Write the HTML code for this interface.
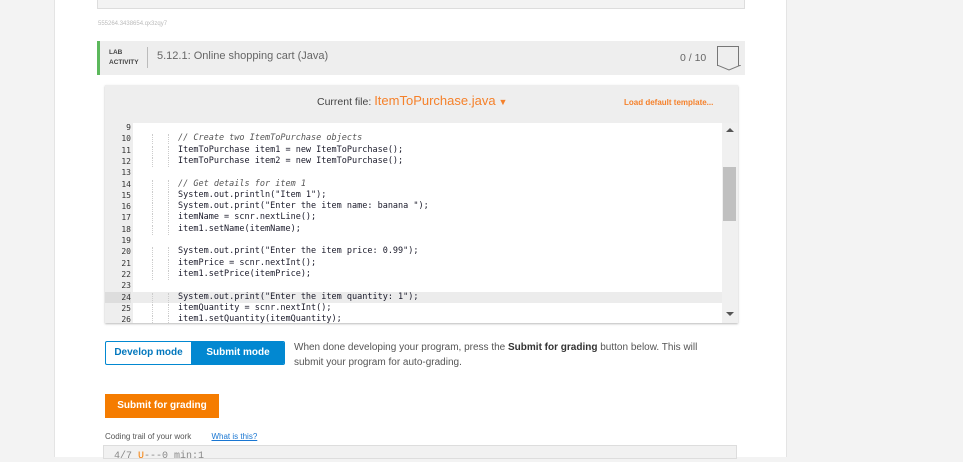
<!DOCTYPE html>
<html><head><meta charset="utf-8"><style>
*{box-sizing:border-box;margin:0;padding:0}
body{width:963px;height:457px;overflow:hidden;background:#f3f3f3;font-family:"Liberation Sans",sans-serif;position:relative}
.main{position:absolute;left:54px;top:0;width:733px;height:457px;background:#fff;border-left:1px solid #e4e4e4;border-right:1px solid #e4e4e4}
.abs{position:absolute}
.topbox{left:97px;top:-2px;width:648px;height:11px;background:#f3f3f3;border:1px solid #ddd}
.hash{left:98px;top:21px;font-size:6px;color:#bbb}
.lab{left:97px;top:41px;width:648px;height:34px;background:#eee;border-left:3px solid #5cb85c}
.lab .t{position:absolute;left:9px;top:7px;font-size:6.5px;font-weight:bold;color:#444;line-height:10px}
.lab .sep{position:absolute;left:47px;top:6px;width:1px;height:21px;background:#bbb}
.lab .ttl{position:absolute;left:57px;top:9px;font-size:11px;color:#666}
.lab .sc{position:absolute;left:580px;top:11px;font-size:10.5px;color:#666}
.badge{position:absolute;left:617px;top:5px;width:22px;height:20px;border:1px solid #777;border-bottom:none}
.badge svg{position:absolute;left:-1px;top:18px}
.ed{left:105px;top:85px;width:633px;height:238px;background:#eee;box-shadow:0 1px 2px #bbb}
.cf{position:absolute;left:212px;top:8px;font-size:10.5px;color:#444}
.cf b{font-weight:normal;color:#f5812b;font-size:13px}
.ld{position:absolute;left:519px;top:13px;font-size:8px;font-weight:bold;color:#f5812b}
.code{position:absolute;left:0;top:38px;width:617px;height:200px;background:#fff;overflow:hidden}
.gut{position:absolute;left:0;top:0;width:28px;height:200px;background:#eee}
.ln{position:absolute;left:0;width:617px;height:11.3px;font:8.5px/11.3px "DejaVu Sans Mono","Liberation Mono",monospace;color:#1a1a2a}
.ln .n{position:absolute;left:0;width:26px;text-align:right;color:#333;font-size:8px}
.ln .c{position:absolute;left:73px;white-space:pre}
.ln .g1{position:absolute;left:47px;top:1px;height:10px;border-left:1px dotted #ccc}
.ln .g2{position:absolute;left:63px;top:1px;height:10px;border-left:1px dotted #ccc}
.cm{color:#555;font-style:italic}
.sb{position:absolute;left:617px;top:38px;width:16px;height:200px;background:#f0f0f0}
.thumb{position:absolute;left:1px;top:44px;width:13px;height:54px;background:#c0c0c0}
.btns{left:105px;top:341px;width:180px;height:24px;border:1px solid #0288d1;border-radius:2px;overflow:hidden;font-size:10px;font-weight:bold}
.btns .d{position:absolute;left:0;top:0;width:85px;height:22px;color:#0277bd;text-align:center;line-height:22px}
.btns .s{position:absolute;left:85px;top:0;width:94px;height:22px;background:#0288d1;color:#fff;text-align:center;line-height:22px}
.desc{left:294px;top:340px;width:430px;font-size:10px;color:#555;line-height:15px}
.desc b{color:#333}
.sfg{left:105px;top:394px;width:114px;height:24px;background:#f57c00;color:#fff;font-size:10px;font-weight:bold;text-align:center;line-height:24px}
.ct{left:105px;top:432px;font-size:8px;color:#555}
.ct a{color:#1976d2;text-decoration:underline;margin-left:18px}
.trail{left:103px;top:445px;width:634px;height:14px;background:#f1f1f1;border:1px solid #ddd;font:10px "Liberation Mono",monospace;color:#888;padding:5px 0 0 10px}
</style></head><body>
<div class="main"></div>
<div class="abs topbox"></div>
<div class="abs hash">555264.3438654.qx3zqy7</div>
<div class="abs lab"><div class="t">LAB<br>ACTIVITY</div><div class="sep"></div><div class="ttl">5.12.1: Online shopping cart (Java)</div><div class="sc">0 / 10</div><div class="badge"><svg width="24" height="6"><path d="M0 0 L12 5 L24 0" fill="none" stroke="#777"/></svg></div></div>
<div class="abs ed">
<div class="cf">Current file: <b>ItemToPurchase.java</b> <span style="color:#f5812b;font-size:9px">&#9660;</span></div>
<div class="ld">Load default template...</div>
<div class="code"><div class="gut"></div>
<div class="ln" style="top:-1px"><span class="n">9</span></div>
<div class="ln" style="top:10.3px"><span class="n">10</span><span class="g1"></span><span class="g2"></span><span class="c cm">// Create two ItemToPurchase objects</span></div>
<div class="ln" style="top:21.6px"><span class="n">11</span><span class="g1"></span><span class="g2"></span><span class="c">ItemToPurchase item1 = new ItemToPurchase();</span></div>
<div class="ln" style="top:32.9px"><span class="n">12</span><span class="g1"></span><span class="g2"></span><span class="c">ItemToPurchase item2 = new ItemToPurchase();</span></div>
<div class="ln" style="top:44.2px"><span class="n">13</span></div>
<div class="ln" style="top:55.5px"><span class="n">14</span><span class="g1"></span><span class="g2"></span><span class="c cm">// Get details for item 1</span></div>
<div class="ln" style="top:66.8px"><span class="n">15</span><span class="g1"></span><span class="g2"></span><span class="c">System.out.println("Item 1");</span></div>
<div class="ln" style="top:78.1px"><span class="n">16</span><span class="g1"></span><span class="g2"></span><span class="c">System.out.print("Enter the item name: banana ");</span></div>
<div class="ln" style="top:89.4px"><span class="n">17</span><span class="g1"></span><span class="g2"></span><span class="c">itemName = scnr.nextLine();</span></div>
<div class="ln" style="top:100.7px"><span class="n">18</span><span class="g1"></span><span class="g2"></span><span class="c">item1.setName(itemName);</span></div>
<div class="ln" style="top:112px"><span class="n">19</span></div>
<div class="ln" style="top:123.3px"><span class="n">20</span><span class="g1"></span><span class="g2"></span><span class="c">System.out.print("Enter the item price: 0.99");</span></div>
<div class="ln" style="top:134.6px"><span class="n">21</span><span class="g1"></span><span class="g2"></span><span class="c">itemPrice = scnr.nextInt();</span></div>
<div class="ln" style="top:145.9px"><span class="n">22</span><span class="g1"></span><span class="g2"></span><span class="c">item1.setPrice(itemPrice);</span></div>
<div class="ln" style="top:157.2px"><span class="n">23</span></div>
<div class="ln" style="top:168.5px;background:#ececec"><span class="n" style="background:#ddd">24</span><span class="g1"></span><span class="g2"></span><span class="c">System.out.print("Enter the item quantity: 1");</span></div>
<div class="ln" style="top:179.8px"><span class="n">25</span><span class="g1"></span><span class="g2"></span><span class="c">itemQuantity = scnr.nextInt();</span></div>
<div class="ln" style="top:191.1px"><span class="n">26</span><span class="g1"></span><span class="g2"></span><span class="c">item1.setQuantity(itemQuantity);</span></div>
</div>
<div class="sb"><div style="position:absolute;left:4px;top:5px;width:0;height:0;border-left:4px solid transparent;border-right:4px solid transparent;border-bottom:4px solid #555"></div><div class="thumb"></div><div style="position:absolute;left:4px;top:189px;width:0;height:0;border-left:4px solid transparent;border-right:4px solid transparent;border-top:4px solid #555"></div></div>
</div>
<div class="abs btns"><div class="d">Develop mode</div><div class="s">Submit mode</div></div>
<div class="abs desc">When done developing your program, press the <b>Submit for grading</b> button below. This will submit your program for auto-grading.</div>
<div class="abs sfg">Submit for grading</div>
<div class="abs ct">Coding trail of your work <a>What is this?</a></div>
<div class="abs trail">4/7 <span style="color:#f57c00">U</span>---0 min:1</div>
</body></html>
